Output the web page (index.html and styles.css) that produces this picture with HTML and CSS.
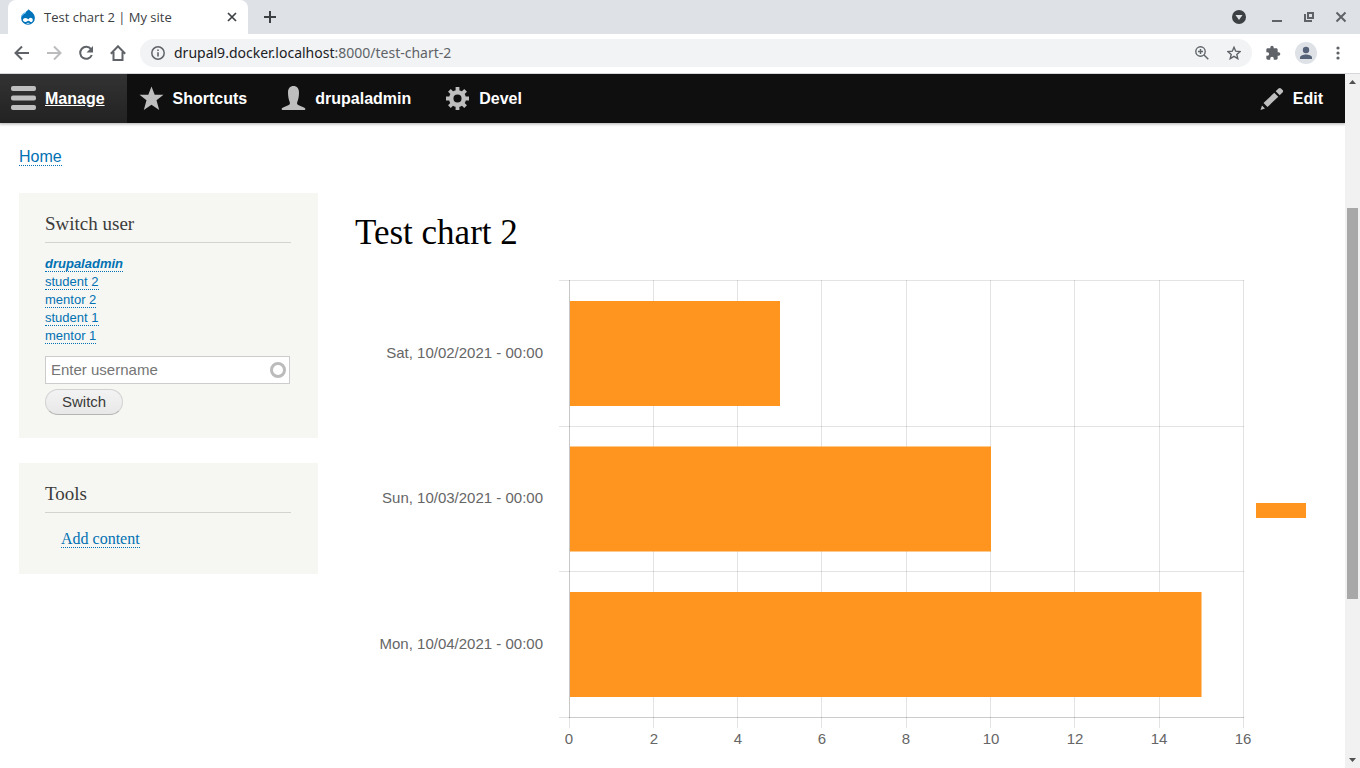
FILE: index.html
```html
<!DOCTYPE html>
<html lang="en">
<head>
    <meta charset="UTF-8">
    <title>Test chart 2 | My site</title>
    <link rel="stylesheet" href="styles.css">
</head>
<body>
    <header class="browser">
        <div class="tab-strip">
            <div class="tab">
                <svg class="favicon" viewBox="0 0 16 16">
                    <path fill="#0073ba" d="M8.800 0.300C9.800 2 14.900 4 14.900 9a6.900 6.700 0 0 1-13.800 0C1.100 5 4.500 3.800 6 2.700 7.200 1.900 7.600 1.500 8.800.3z"/>
                    <path fill="#81ceff" d="M6 2.700C4.500 3.800 1.100 5 1.100 9c1-3 3.200-3.800 4.900-5z"/>
                    <path fill="#fff" d="M10.300 8.800c1.400 0 2.500.8 2.500 2.300s-1 2.300-2 2c-1-.3-1.500-1.500-2.400-1.300-1.300.2-1.500 1.200-3 1.200s-2.400-.9-2.400-1.900c0-1.300 1-2 2.400-2 1.600 0 2.400 1.100 2.900 1.100s1.100-1.400 2-1.400z"/>
                    <path fill="#fff" d="M6 14.300c1.500-.8 3-.8 4 0-1.200.6-2.900.6-4 0z"/>
                </svg>
                <span class="tab-title">Test chart 2 | My site</span>
                <button class="icon-btn" aria-label="Close tab">
                    <svg width="12" height="12" viewBox="0 0 12 12"><path d="M2 2l8 8M10 2l-8 8" stroke="#3c4043" stroke-width="1.700"/></svg>
                </button>
            </div>
            <button class="icon-btn new-tab" aria-label="New tab">
                <svg width="14" height="14" viewBox="0 0 14 14"><path d="M7 1v12M1 7h12" stroke="#3c4043" stroke-width="2"/></svg>
            </button>
            <div class="window-controls">
                <button class="icon-btn" aria-label="Search tabs">
                    <svg width="14" height="14" viewBox="0 0 14 14"><circle cx="7" cy="7" r="7" fill="#3c4043"/><path d="M3.500 5h7L7 10z" fill="#dee1e6"/></svg>
                </button>
                <button class="icon-btn" aria-label="Minimize">
                    <svg width="14" height="14" viewBox="0 0 14 14"><path d="M2 11h10" stroke="#5f6368" stroke-width="2"/></svg>
                </button>
                <button class="icon-btn" aria-label="Restore">
                    <svg width="14" height="14" viewBox="0 0 14 14"><path d="M6 3h5v5H6zM3 4v7h7" fill="none" stroke="#5f6368" stroke-width="2"/></svg>
                </button>
                <button class="icon-btn" aria-label="Close">
                    <svg width="14" height="14" viewBox="0 0 14 14"><path d="M2.500 2.500l9 9M11.500 2.500l-9 9" stroke="#5f6368" stroke-width="2"/></svg>
                </button>
            </div>
        </div>
        <nav class="address-bar">
            <button class="icon-btn" aria-label="Back">
                <svg width="16" height="16" viewBox="0 0 16 16"><path d="M15 8H2M8 1.500L1.500 8 8 14.500" fill="none" stroke="#5f6368" stroke-width="2"/></svg>
            </button>
            <button class="icon-btn" aria-label="Forward" disabled>
                <svg width="16" height="16" viewBox="0 0 16 16"><path d="M1 8h13M8 1.500L14.500 8 8 14.500" fill="none" stroke="#babcbe" stroke-width="2"/></svg>
            </button>
            <button class="icon-btn" aria-label="Reload">
                <svg width="16" height="16" viewBox="0 0 16 16"><path d="M13 4.200A6 6 0 1 0 13.800 10" fill="none" stroke="#5f6368" stroke-width="2"/><path d="M15 1v6.500H8.500z" fill="#5f6368"/></svg>
            </button>
            <button class="icon-btn" aria-label="Home">
                <svg width="16" height="16" viewBox="0 0 16 16"><path d="M0.800 8.700L8 1.300l7.200 7.400M3.500 7v8h9V7" fill="none" stroke="#5f6368" stroke-width="2"/></svg>
            </button>
            <div class="omnibox">
                <svg width="14" height="14" viewBox="0 0 14 14"><circle cx="7" cy="7" r="6.200" fill="none" stroke="#5f6368" stroke-width="1.500"/><path d="M7 6.200v4.300M7 3.500v1.600" stroke="#5f6368" stroke-width="1.600"/></svg>
                <div class="url" role="textbox" contenteditable="true" spellcheck="false" aria-label="Address">drupal9.docker.localhost<span class="url-path">:8000/test-chart-2</span></div>
                <button class="icon-btn" aria-label="Zoom">
                    <svg width="14" height="14" viewBox="0 0 14 14"><circle cx="5.500" cy="5.500" r="4.700" fill="none" stroke="#5f6368" stroke-width="1.400"/><path d="M9 9l4.300 4.300M5.500 3v5M3 5.500h5" stroke="#5f6368" stroke-width="1.400"/></svg>
                </button>
                <button class="icon-btn" aria-label="Bookmark">
                    <svg width="14" height="14" viewBox="0 0 14 14"><path d="M7 1.300l1.700 3.900 4.300.4-3.200 2.800 1 4.300L7 10.400l-3.800 2.300 1-4.300L1 5.600l4.300-.4z" fill="none" stroke="#5f6368" stroke-width="1.400"/></svg>
                </button>
            </div>
            <button class="icon-btn" aria-label="Extensions">
                <svg width="16" height="16" viewBox="0 0 24 24"><path fill="#5f6368" d="M20.500 11H19V7c0-1.100-.9-2-2-2h-4V3.500a2.500 2.500 0 0 0-5 0V5H4c-1.100 0-2 .9-2 2v3.800h1.500a2.700 2.700 0 0 1 0 5.400H2V20c0 1.100.9 2 2 2h3.800v-1.500a2.700 2.700 0 0 1 5.400 0V22H17c1.100 0 2-.9 2-2v-4h1.500a2.500 2.500 0 0 0 0-5z"/></svg>
            </button>
            <button class="icon-btn avatar" aria-label="Profile">
                <svg width="22" height="22" viewBox="0 0 22 22"><circle cx="11" cy="11" r="11" fill="#dee1e6"/><circle cx="11" cy="8" r="3.200" fill="#566277"/><path d="M5 17v-1.500C5 13.500 8.500 12.500 11 12.500s6 1 6 3V17z" fill="#566277"/></svg>
            </button>
            <button class="icon-btn" aria-label="Menu">
                <svg width="14" height="14" viewBox="0 0 14 14" fill="#5f6368"><circle cx="7" cy="2" r="1.600"/><circle cx="7" cy="7" r="1.600"/><circle cx="7" cy="12" r="1.600"/></svg>
            </button>
        </nav>
    </header>

    <div class="viewport">
        <div class="page">
            <nav class="toolbar">
                <a href="#" class="toolbar-item is-active">
                    <svg viewBox="0 0 25 25"><rect y="0" width="25" height="5" rx="2"/><rect y="9.500" width="25" height="5" rx="2"/><rect y="19" width="25" height="5" rx="2"/></svg>
                    <span>Manage</span>
                </a>
                <a href="#" class="toolbar-item">
                    <svg viewBox="0 0 25 25"><path d="M12.500 0.500l3.200 8.200 8.800.1-7 5.500 2.700 9.700-7.700-5.300L4.800 24l2.700-9.700-7-5.500 8.800-.1z"/></svg>
                    <span>Shortcuts</span>
                </a>
                <a href="#" class="toolbar-item">
                    <svg viewBox="0 0 25 25"><path d="M1.500 24c-1 0-1.100-1.200-.3-1.900 1.600-1.400 4.600-2.200 6.500-3.200 1.200-.6 1.500-1.800 1-3C7.500 13 7 10 7 6.500 7 2.500 9 0 12.500 0S18 2.500 18 6.500c0 3.500-.5 6.500-1.700 9.400-.5 1.200-.2 2.400 1 3 1.900 1 4.900 1.800 6.500 3.200.8.700.7 1.900-.3 1.900z"/></svg>
                    <span>drupaladmin</span>
                </a>
                <a href="#" class="toolbar-item">
                    <svg viewBox="0 0 25 25"><circle cx="12.500" cy="12.500" r="6.300" fill="none" stroke="#bebebe" stroke-width="4.500"/><path d="M12.500 1v5M12.500 19v5M1 12.500h5M19 12.500h5M4.400 4.400l3.300 3.300M17.300 17.300l3.300 3.300M20.600 4.400l-3.300 3.300M7.700 17.300l-3.300 3.300" stroke="#bebebe" stroke-width="3.800"/></svg>
                    <span>Devel</span>
                </a>
                <a href="#" class="toolbar-item toolbar-edit">
                    <svg viewBox="0 0 25 25"><path d="M1.500 24l1.500-4.500 3 3zM4.500 17l10.800-10.300 4 4L8.500 21zM16.700 5.300l2.800-2.800c.8-.8 1.800-.8 2.500-.1l1.600 1.600c.7.700.7 1.700-.1 2.500l-2.800 2.800z"/></svg>
                    <span>Edit</span>
                </a>
            </nav>

            <nav class="breadcrumb"><a href="#">Home</a></nav>

            <div class="layout">
                <aside class="sidebar">
                    <section class="block">
                        <h2>Switch user</h2>
                        <ul class="users">
                            <li><a href="#" class="current">drupaladmin</a></li>
                            <li><a href="#">student 2</a></li>
                            <li><a href="#">mentor 2</a></li>
                            <li><a href="#">student 1</a></li>
                            <li><a href="#">mentor 1</a></li>
                        </ul>
                        <form class="switch-form">
                            <div class="autocomplete">
                                <input type="text" placeholder="Enter username" aria-label="Username">
                                <span class="throbber"></span>
                            </div>
                            <button type="button" class="button">Switch</button>
                        </form>
                    </section>
                    <section class="block">
                        <h2>Tools</h2>
                        <ul class="menu">
                            <li><a href="#">Add content</a></li>
                        </ul>
                    </section>
                </aside>

                <main class="content">
                    <h1>Test chart 2</h1>
                    <svg class="chart" viewBox="0 0 971 500">
                        <!-- grid -->
                        <g class="grid">
                            <path d="M204 10.500h685M204 156.500h685M204 301.500h685M204 447.500h685"/>
                            <path d="M298.500 10v448M382.500 10v448M466.500 10v448M551.500 10v448M635.500 10v448M719.500 10v448M804.500 10v448M888.500 10v448M214.500 448v10"/>
                            <path class="axis-y" d="M214.500 10v438"/>
                            <path class="axis-x" d="M214 447.500h675"/>
                        </g>
                        <!-- bars -->
                        <g class="bars">
                            <rect x="215" y="31" width="210" height="105"/>
                            <rect x="215" y="176.500" width="421" height="105"/>
                            <rect x="215" y="322" width="631.500" height="105"/>
                            <rect x="901" y="233" width="50" height="15"/>
                        </g>
                        <g class="labels labels-y">
                            <text x="188" y="88">Sat, 10/02/2021 - 00:00</text>
                            <text x="188" y="233">Sun, 10/03/2021 - 00:00</text>
                            <text x="188" y="379">Mon, 10/04/2021 - 00:00</text>
                        </g>
                        <g class="labels">
                            <text x="214" y="474">0</text>
                            <text x="299" y="474">2</text>
                            <text x="383" y="474">4</text>
                            <text x="467" y="474">6</text>
                            <text x="551" y="474">8</text>
                            <text x="636" y="474">10</text>
                            <text x="720" y="474">12</text>
                            <text x="804" y="474">14</text>
                            <text x="888" y="474">16</text>
                        </g>
                    </svg>
                </main>
            </div>
        </div>

        <div class="scrollbar">
            <svg viewBox="0 0 15 16"><path d="M4 10l3.500-4 3.500 4z" fill="#505050"/></svg>
            <div class="track">
                <div class="thumb"></div>
            </div>
            <svg viewBox="0 0 15 16"><path d="M4 6l3.500 4L11 6z" fill="#505050"/></svg>
        </div>
    </div>
</body>
</html>
```
FILE: styles.css
```css
* {
    box-sizing: border-box;
}

body {
    margin: 0;
    height: 100vh;
    display: flex;
    flex-direction: column;
    overflow: hidden;
    background: #fff;
    font-family: "Liberation Sans", Arial, sans-serif;
}

ul {
    list-style: none;
    margin: 0;
    padding: 0;
}

/* Browser window */
.browser {
    flex: none;
    font-family: "Noto Sans", sans-serif;
    border-bottom: 1px solid #d5d7da;
}

.tab-strip {
    display: flex;
    align-items: center;
    height: 34px;
    padding: 0 12px 0 8px;
    background: #dee1e6;
}

.tab {
    display: flex;
    align-items: center;
    gap: 8px;
    width: 240px;
    height: 34px;
    padding: 0 10px 0 12px;
    background: #fff;
    border-radius: 8px 8px 0 0;
}

.favicon {
    width: 16px;
    height: 16px;
}

.tab-title {
    flex: 1;
    font-family: "Open Sans", sans-serif;
    font-size: 13px;
    color: #3c4043;
    white-space: nowrap;
}

.icon-btn {
    display: flex;
    padding: 0;
    border: none;
    background: none;
    cursor: pointer;
}

.new-tab {
    margin-left: 15px;
}

.window-controls {
    display: flex;
    gap: 18px;
    margin-left: auto;
}

.window-controls .icon-btn:first-child {
    margin-right: 6px;
}

.address-bar {
    display: flex;
    align-items: center;
    gap: 16px;
    height: 39px;
    padding: 0 15px 2px 14px;
    background: #fff;
}

.omnibox {
    flex: 1;
    display: flex;
    align-items: center;
    gap: 18px;
    height: 28px;
    margin: 0 -3px 0 -2px;
    padding: 0 11px;
    border-radius: 14px;
    background: #f1f3f4;
}

.url {
    flex: 1;
    margin-left: -9px;
    font-size: 14px;
    color: #202124;
    outline: none;
}

.url-path {
    color: #5f6368;
}

.avatar {
    margin: 0 -2px;
}

/* Page area */
.viewport {
    flex: 1;
    min-height: 0;
    display: flex;
}

.page {
    flex: 1;
    min-width: 0;
    overflow: hidden;
}

.scrollbar {
    width: 15px;
    display: flex;
    flex-direction: column;
    background: #f1f1f1;
}

.scrollbar svg {
    height: 16px;
}

.track {
    flex: 1;
    display: flex;
    flex-direction: column;
    padding: 0 2px;
}

.track::before {
    content: "";
    flex: 118;
}

.track::after {
    content: "";
    flex: 153;
}

.thumb {
    flex: 391;
    background: #a8a8a8;
}

/* Admin toolbar */
.toolbar {
    display: flex;
    height: 49px;
    background: #0f0f0f;
    box-shadow: 0 0 3px 1px rgba(0, 0, 0, 0.33);
}

.toolbar-item {
    display: flex;
    align-items: center;
    gap: 9px;
    padding: 0 22px 0 11px;
    color: #fff;
    font-size: 16px;
    font-weight: bold;
    text-decoration: none;
}

.toolbar-item + .toolbar-item {
    padding-left: 12px;
}

.toolbar-item svg {
    width: 25px;
    height: 25px;
    fill: #bebebe;
}

.toolbar-item.is-active {
    background: linear-gradient(#333, #222);
    text-decoration: underline;
}

.toolbar-edit {
    margin-left: auto;
}

/* Content */
.page li a,
.breadcrumb a {
    color: #0071b3;
    text-decoration: none;
    border-bottom: 1px dotted;
}

.breadcrumb {
    padding: 25px 19px 0;
    font-size: 16px;
    line-height: 18px;
}

.layout {
    display: grid;
    grid-template-columns: 299px 1fr;
    gap: 37px;
    padding: 27px 19px 0;
}

.sidebar {
    display: flex;
    flex-direction: column;
    gap: 25px;
}

.block {
    padding: 20px 27px 23px 26px;
    background: #f6f6f2;
    font-family: "Liberation Serif", serif;
}

.block h2 {
    margin: 0 0 12px;
    padding-bottom: 7px;
    border-bottom: 1px solid #d3d4d0;
    font-size: 19px;
    font-weight: normal;
    line-height: 22px;
    color: #3b3b3b;
}

.users {
    font-family: "Liberation Sans", Arial, sans-serif;
    font-size: 13px;
    line-height: 18px;
}

.users .current {
    font-weight: bold;
    font-style: italic;
}

.menu {
    padding: 5px 16px 3px;
    font-size: 16px;
    line-height: 18px;
}

.switch-form {
    margin-top: 11px;
}

.autocomplete {
    position: relative;
    margin-right: 1px;
}

.autocomplete input {
    display: block;
    width: 100%;
    height: 28px;
    padding: 0 24px 2px 5px;
    border: 1px solid #ccc;
    background: #fff;
    font-family: "Liberation Sans", Arial, sans-serif;
    font-size: 15px;
    color: #3b3b3b;
}

.autocomplete input::placeholder {
    color: #757575;
}

.throbber {
    position: absolute;
    top: 6px;
    right: 4px;
    width: 16px;
    height: 16px;
    border: 3px solid #bbb;
    border-radius: 50%;
}

.button {
    display: block;
    height: 26px;
    margin-top: 5px;
    padding: 0 16px 2px;
    border: 1px solid #d2d2d2;
    border-bottom-color: #b4b4b4;
    border-radius: 13px;
    background: linear-gradient(#f3f3f3, #e8e8e8);
    font-family: "Liberation Sans", Arial, sans-serif;
    font-size: 15px;
    color: #3a3a3a;
}

.content h1 {
    margin: 20px 0 17px;
    font-family: "Liberation Serif", serif;
    font-size: 35px;
    font-weight: normal;
    line-height: 40px;
    color: #000;
}

/* Chart */
.chart {
    display: block;
    width: 100%;
}

.grid path {
    fill: none;
    stroke: rgba(0, 0, 0, 0.11);
}

.grid .axis-y {
    stroke: rgba(0, 0, 0, 0.22);
}

.grid .axis-x {
    stroke: rgba(0, 0, 0, 0.1);
}

.bars rect {
    fill: #ff941f;
}

.labels text {
    font-size: 15px;
    fill: #666;
    text-anchor: middle;
}

.labels-y text {
    text-anchor: end;
}
```
